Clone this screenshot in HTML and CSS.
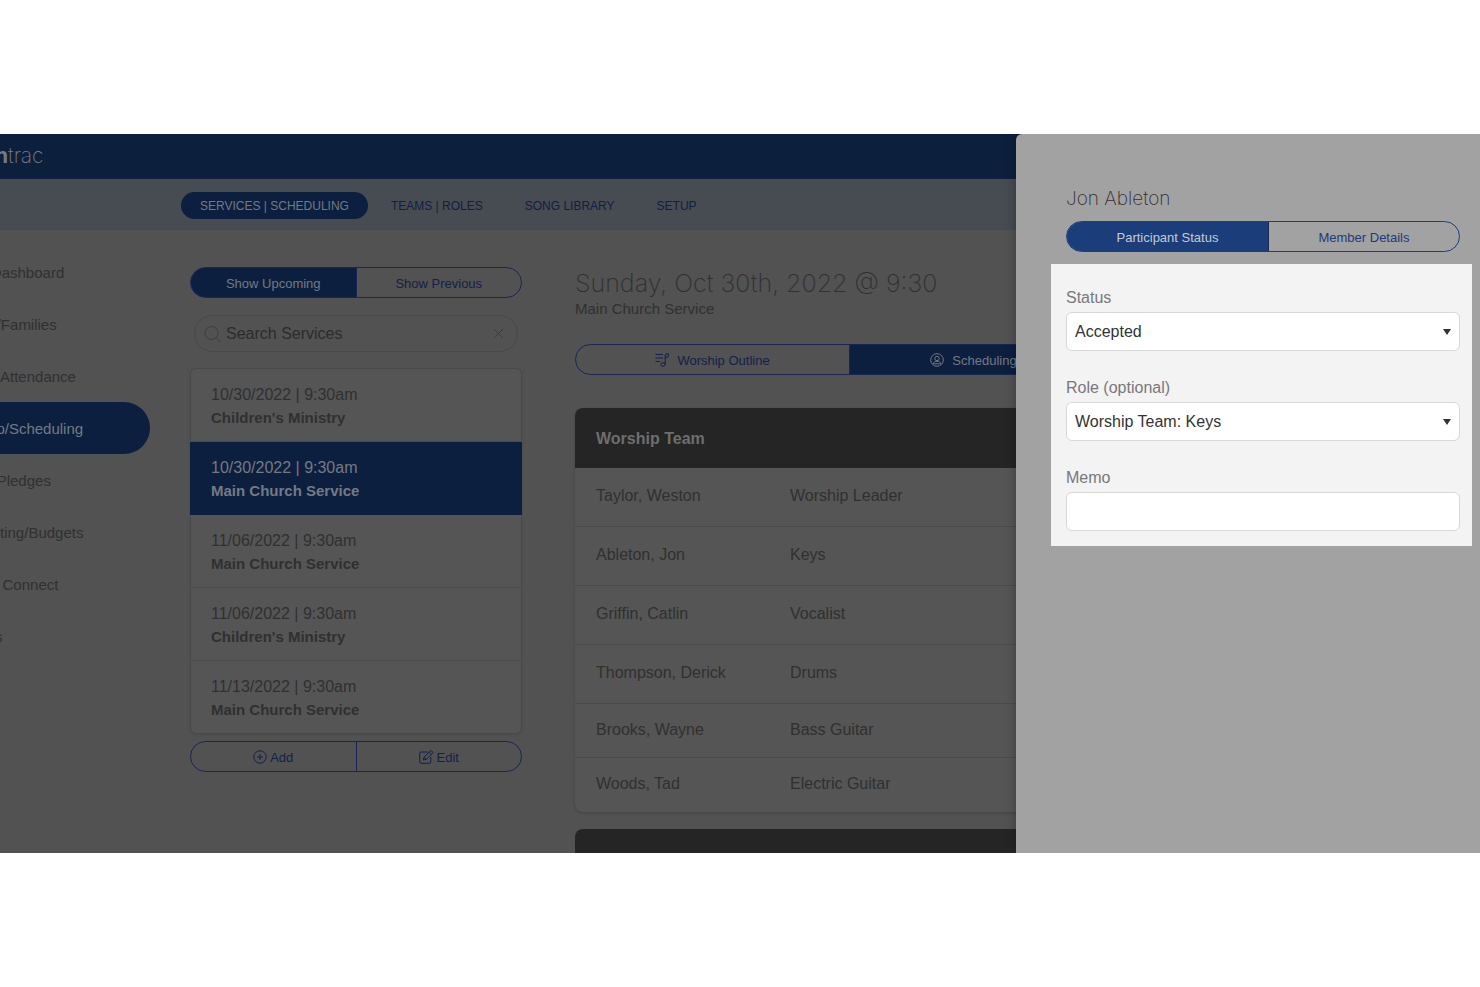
FILE: index.html
```html
<!DOCTYPE html>
<html lang="en">
<head>
  <meta charset="UTF-8" />
  <meta name="viewport" content="width=device-width, initial-scale=1.0" />
  <title>Services | Scheduling</title>
  <link rel="stylesheet" href="styles.css">
</head>
<body>
  <div class="app">
    <header class="topbar">
      <a class="logo" href="#"><b>church</b>trac</a>
    </header>

    <nav class="subnav">
      <a class="active" href="#">SERVICES | SCHEDULING</a>
      <a href="#">TEAMS | ROLES</a>
      <a href="#">SONG LIBRARY</a>
      <a href="#">SETUP</a>
    </nav>

    <div class="content">
      <nav class="sidebar">
        <a href="#">Team Dashboard</a>
        <a href="#">People/Families</a>
        <a href="#">Events/Attendance</a>
        <a class="active" href="#">Worship/Scheduling</a>
        <a href="#">Giving/Pledges</a>
        <a href="#">Accounting/Budgets</a>
        <a href="#">Church Connect</a>
        <a href="#">Reports</a>
      </nav>

      <section class="services">
        <div class="segment">
          <button class="active">Show Upcoming</button>
          <button>Show Previous</button>
        </div>

        <div class="search">
          <svg width="18" height="18" viewBox="0 0 18 18"><circle cx="7.5" cy="8" r="6.5"/><path d="M12.2 12.7L17 17.5"/></svg>
          <input type="text" placeholder="Search Services" aria-label="Search Services" />
          <button aria-label="Clear search">
            <svg width="11" height="11" viewBox="0 0 11 11"><path d="M1 1l9 9M10 1l-9 9"/></svg>
          </button>
        </div>

        <div class="service-list">
          <a href="#"><span>10/30/2022 | 9:30am</span><b>Children's Ministry</b></a>
          <a class="active" href="#"><span>10/30/2022 | 9:30am</span><b>Main Church Service</b></a>
          <a href="#"><span>11/06/2022 | 9:30am</span><b>Main Church Service</b></a>
          <a href="#"><span>11/06/2022 | 9:30am</span><b>Children's Ministry</b></a>
          <a href="#"><span>11/13/2022 | 9:30am</span><b>Main Church Service</b></a>
        </div>

        <div class="segment">
          <button>
            <svg width="14" height="14" viewBox="0 0 14 14"><circle cx="7" cy="7" r="6.2"/><path d="M7 4v6M4 7h6"/></svg>
            Add
          </button>
          <button>
            <svg width="15" height="14" viewBox="0 0 15 14"><path d="M8.5 2H2.2Q.7 2 .7 3.5V11.8Q.7 13.3 2.2 13.3H10.3Q11.8 13.3 11.8 11.8V7"/><path d="M4.3 10l.8-3L11.3.9q.7-.6 1.4 0l.9.9q.6.7 0 1.4L7.4 9.2zM10 2.2l2.3 2.3M5.1 7l2.3 2.2"/></svg>
            Edit
          </button>
        </div>
      </section>

      <main class="detail">
        <h1>Sunday, Oct 30th, 2022 @ 9:30</h1>
        <p class="subtitle">Main Church Service</p>

        <div class="segment tabs">
          <button>
            <svg width="14" height="14" viewBox="0 0 14 14"><path d="M.5 1.5H8M.5 5H8M.5 8.5H5M10.2 11.5V2.5Q10.2.8 12 .8H13.3V3.3Q13.3 4.2 12 4.2H10.2"/><ellipse cx="8" cy="11.5" rx="2.2" ry="1.8"/></svg>
            Worship Outline
          </button>
          <button class="active">
            <svg width="14" height="14" viewBox="0 0 14 14"><circle cx="7" cy="7" r="6.3"/><circle cx="7" cy="5.5" r="2.2"/><path d="M3.3 10.8C3.3 8.8 5 8.3 7 8.3s3.7.5 3.7 2.5z"/></svg>
            Scheduling
          </button>
        </div>

        <table class="team">
          <thead>
            <tr><th colspan="2">Worship Team</th></tr>
          </thead>
          <tbody>
            <tr><td>Taylor, Weston</td><td>Worship Leader</td></tr>
            <tr><td>Ableton, Jon</td><td>Keys</td></tr>
            <tr><td>Griffin, Catlin</td><td>Vocalist</td></tr>
            <tr><td>Thompson, Derick</td><td>Drums</td></tr>
            <tr class="short"><td>Brooks, Wayne</td><td>Bass Guitar</td></tr>
            <tr class="short"><td>Woods, Tad</td><td>Electric Guitar</td></tr>
          </tbody>
        </table>

        <div class="next-team"></div>
      </main>
    </div>

    <aside class="drawer">
      <h2>Jon Ableton</h2>
      <div class="segment">
        <button class="active">Participant Status</button>
        <button>Member Details</button>
      </div>

      <form class="status-form">
        <label for="status">Status</label>
        <div class="select">
          <select id="status"><option>Accepted</option></select>
        </div>

        <label for="role">Role (optional)</label>
        <div class="select">
          <select id="role"><option>Worship Team: Keys</option></select>
        </div>

        <label for="memo">Memo</label>
        <input type="text" id="memo" />
      </form>
    </aside>
  </div>
</body>
</html>
```

FILE: styles.css
```css
* {
  box-sizing: border-box;
}

body {
  margin: 0;
  padding: 134px 0;
  height: 100vh;
  display: flex;
  background: #fff;
  font-family: "Liberation Sans", Arial, sans-serif;
  font-size: 16px;
  color: #303030;
}

a {
  color: inherit;
  text-decoration: none;
}

svg {
  fill: none;
  stroke: currentColor;
  stroke-width: 1;
  flex: none;
}

button,
input,
select {
  font-family: inherit;
  color: inherit;
}

.app {
  position: relative;
  flex: 1;
  min-width: 0;
  overflow: hidden;
  background: #525252;
}

.topbar {
  height: 45px;
  padding-bottom: 2px;
  display: flex;
  align-items: center;
  background: #0c1f3c;
  border-bottom: 1px solid #141f48;
}

.logo {
  margin-left: -64px;
  font-family: Inter, sans-serif;
  font-size: 21px;
  font-weight: 200;
  color: #747a84;
}

.logo b {
  font-weight: 700;
}

.subnav {
  height: 51px;
  padding: 2px 0 0 181px;
  display: flex;
  align-items: center;
  gap: 4px;
  background: #464c51;
  border-bottom: 1px solid #414b54;
  font-size: 12px;
  color: #131d45;
}

.subnav a {
  padding: 1px 19px 0;
  line-height: 26px;
  border-radius: 14px;
}

.subnav .active {
  background: #0c1f3f;
  color: #747a84;
}

.content {
  display: flex;
}

.sidebar {
  width: 200px;
  margin: 16px 40px 0 -50px;
  flex: none;
  font-size: 15px;
}

.sidebar a {
  display: block;
  line-height: 54px;
  height: 52px;
  white-space: nowrap;
}

.sidebar .active {
  margin-left: -30px;
  padding-left: 30px;
  border-radius: 26px;
  background: #0c1f3f;
  color: #747a84;
}

.services {
  width: 332px;
  margin: 37px 53px 0 0;
  flex: none;
}

.segment {
  display: flex;
  height: 31px;
  border: 1px solid #1b2555;
  border-radius: 16px;
  overflow: hidden;
}

.segment button {
  flex: 1;
  display: flex;
  align-items: center;
  justify-content: center;
  gap: 3px;
  padding: 1px 0 0;
  border: 0;
  background: none;
  font-size: 13px;
  color: #141f4a;
  cursor: pointer;
}

.segment button + button {
  border-left: 1px solid #1b2555;
}

.segment .active {
  background: #0c1f3f;
  color: #747a84;
}

.search {
  display: flex;
  align-items: center;
  height: 37px;
  margin: 17px 4px 16px;
  padding: 0 13px 0 9px;
  border: 1px solid #484848;
  border-radius: 19px;
  color: #3d3d3d;
}

.search input {
  flex: 1;
  min-width: 0;
  padding: 0 4px;
  border: 0;
  outline: 0;
  background: none;
  font-size: 16px;
}

.search input::placeholder {
  color: #2c2c2c;
}

.search button {
  display: flex;
  padding: 0;
  border: 0;
  background: none;
}

.service-list {
  margin-bottom: 7px;
  border: 1px solid #4a4a4a;
  border-radius: 6px;
  background: #555;
  box-shadow: 0 1px 3px rgba(0, 0, 0, 0.1);
}

.service-list a {
  display: block;
  height: 73px;
  padding: 14px 20px;
  border-bottom: 1px solid #4a4a4a;
}

.service-list a:last-child {
  height: 72px;
  border-bottom: 0;
}

.service-list span,
.service-list b {
  display: block;
  line-height: 23px;
}

.service-list b {
  font-size: 15px;
}

.service-list .active {
  margin: 0 -1px;
  padding: 14px 21px;
  border-bottom-color: #0c1f3f;
  background: #0c1f3f;
  color: #747a84;
}

.detail {
  width: 523px;
  padding-top: 37px;
  flex: none;
}

h1 {
  margin: 0;
  font-family: Inter, sans-serif;
  font-size: 25px;
  font-weight: 200;
  line-height: 32px;
  white-space: nowrap;
}

.subtitle {
  margin: 0 0 25px;
  font-size: 15px;
  line-height: 20px;
}

.tabs button {
  gap: 8px;
}

.tabs button:first-child {
  flex: none;
  width: 273px;
}

.team {
  width: 100%;
  margin: 33px 0 17px;
  border-collapse: separate;
  border-spacing: 0;
  border-radius: 8px;
  background: #555;
  box-shadow: 0 1px 3px rgba(0, 0, 0, 0.2);
}

.team th {
  height: 60px;
  padding: 1px 21px 0;
  border-radius: 8px 8px 0 0;
  background: #252525;
  color: #6e6e6e;
  text-align: left;
}

.team td {
  height: 59px;
  padding: 0 0 2px 21px;
  border-bottom: 1px solid #4a4a4a;
}

.team td + td {
  padding-left: 20px;
}

.team td:first-child {
  width: 195px;
}

.team .short td {
  height: 54px;
}

.team tr:last-child td {
  border-bottom: 0;
}

.next-team {
  height: 60px;
  border-radius: 8px 8px 0 0;
  background: #252525;
}

.drawer {
  position: absolute;
  top: 0;
  right: 0;
  bottom: 0;
  width: 464px;
  padding: 52px 8px 0 35px;
  border-radius: 6px 0 0 0;
  background: #a2a2a2;
  box-shadow: 0 0 12px rgba(0, 0, 0, 0.3);
}

h2 {
  margin: 0 15px 10px;
  font-family: Inter, sans-serif;
  font-size: 19px;
  font-weight: 200;
  line-height: 25px;
}

.drawer .segment {
  margin: 0 12px 12px 15px;
  border-color: #1c3f7e;
}

.drawer .segment button {
  flex: 1 1 auto;
  color: #1c3a7c;
}

.drawer .segment .active {
  background: #1b3d79;
  color: #c3cad6;
}

.status-form {
  display: flex;
  flex-direction: column;
  padding: 23px 12px 15px 15px;
  background: #f3f3f3;
}

.status-form label {
  line-height: 22px;
  margin-bottom: 3px;
  color: #78787c;
}

.status-form input,
.status-form select {
  width: 100%;
  height: 39px;
  padding: 0 8px;
  border: 1px solid #d8d8d8;
  border-radius: 6px;
  background: #fff;
  color: #333;
  font-size: 16px;
  appearance: none;
}

.select {
  position: relative;
  margin-bottom: 26px;
}

.select::after {
  content: "";
  position: absolute;
  top: 17px;
  right: 9px;
  border: 4px solid transparent;
  border-top: 6px solid #333;
  border-bottom: 0;
  pointer-events: none;
}
```
